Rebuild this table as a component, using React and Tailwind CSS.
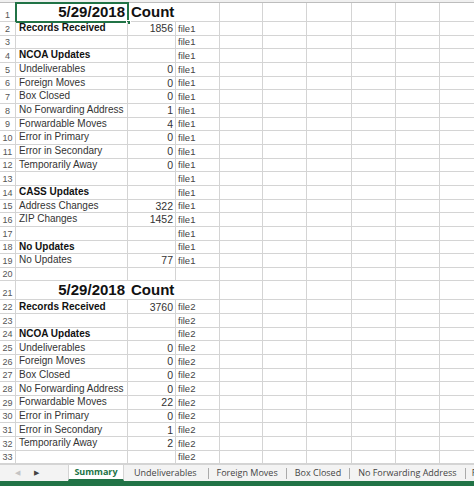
import React from 'react';

const F = "font-['Liberation_Sans',Arial,sans-serif]";

const rows = [
  { n: 1, title: true },
  { n: 2, label: 'Records Received', bold: true, val: '1856', file: 'file1' },
  { n: 3, file: 'file1' },
  { n: 4, label: 'NCOA Updates', bold: true, file: 'file1' },
  { n: 5, label: 'Undeliverables', val: '0', file: 'file1' },
  { n: 6, label: 'Foreign Moves', val: '0', file: 'file1' },
  { n: 7, label: 'Box Closed', val: '0', file: 'file1' },
  { n: 8, label: 'No Forwarding Address', val: '1', file: 'file1' },
  { n: 9, label: 'Forwardable Moves', val: '4', file: 'file1' },
  { n: 10, label: 'Error in Primary', val: '0', file: 'file1' },
  { n: 11, label: 'Error in Secondary', val: '0', file: 'file1' },
  { n: 12, label: 'Temporarily Away', val: '0', file: 'file1' },
  { n: 13, file: 'file1' },
  { n: 14, label: 'CASS Updates', bold: true, file: 'file1' },
  { n: 15, label: 'Address Changes', val: '322', file: 'file1' },
  { n: 16, label: 'ZIP Changes', val: '1452', file: 'file1' },
  { n: 17, file: 'file1' },
  { n: 18, label: 'No Updates', bold: true, file: 'file1' },
  { n: 19, label: 'No Updates', val: '77', file: 'file1' },
  { n: 20 },
  { n: 21, title: true },
  { n: 22, label: 'Records Received', bold: true, val: '3760', file: 'file2' },
  { n: 23, file: 'file2' },
  { n: 24, label: 'NCOA Updates', bold: true, file: 'file2' },
  { n: 25, label: 'Undeliverables', val: '0', file: 'file2' },
  { n: 26, label: 'Foreign Moves', val: '0', file: 'file2' },
  { n: 27, label: 'Box Closed', val: '0', file: 'file2' },
  { n: 28, label: 'No Forwarding Address', val: '0', file: 'file2' },
  { n: 29, label: 'Forwardable Moves', val: '22', file: 'file2' },
  { n: 30, label: 'Error in Primary', val: '0', file: 'file2' },
  { n: 31, label: 'Error in Secondary', val: '1', file: 'file2' },
  { n: 32, label: 'Temporarily Away', val: '2', file: 'file2' },
  { n: 33, file: 'file2' },
];

const extraCols = [43, 44, 45, 44, 44, 40];

const Row = ({ r }) => {
  const h = r.title ? 'h-[19px]' : 'h-[13.67px]';
  return (
    <div className={`flex ${h} relative`}>
      <div className="w-[16px] shrink-0 border-r border-b border-[#d4d4d4] bg-white flex items-end justify-center text-[9px] leading-[12px] text-[#555]">
        {r.n}
      </div>
      {r.title ? (
        <>
          <div className="w-[112px] shrink-0 border-b border-[#d4d4d4] flex items-end justify-end pr-[3px] text-[15px] leading-[18px] font-bold text-[#111]">
            5/29/2018
          </div>
          <div className="w-[92px] shrink-0 border-r border-b border-[#d4d4d4] flex items-end pl-[3px] text-[15px] leading-[18px] font-bold text-[#111]">
            Count
          </div>
        </>
      ) : (
        <>
          <div className={`w-[112px] shrink-0 border-r border-b border-[#d4d4d4] flex items-end pl-[3px] text-[10px] leading-[12.5px] whitespace-nowrap ${r.bold ? 'font-bold text-[#111]' : 'text-[#333]'}`}>
            {r.label}
          </div>
          <div className="w-[48px] shrink-0 border-r border-b border-[#d4d4d4] flex items-end justify-end pr-[2px] text-[10.5px] leading-[12.5px] text-[#333]">
            {r.val}
          </div>
          <div className="w-[44px] shrink-0 border-r border-b border-[#d4d4d4] flex items-end pl-[2px] text-[9.5px] leading-[12px] text-[#444]">
            {r.file}
          </div>
        </>
      )}
      {extraCols.map((w, i) => (
        <div key={i} style={{ width: w }} className="shrink-0 border-r border-b border-[#d4d4d4]" />
      ))}
      {r.n === 1 && (
        <div className="absolute left-[15px] top-[-1px] w-[114px] h-[21px] border-2 border-[#217346] pointer-events-none">
          <div className="absolute right-[-4px] bottom-[-4px] w-[5px] h-[5px] bg-[#217346] border border-white" />
        </div>
      )}
    </div>
  );
};

export default function App() {
  return (
    <div className={`w-[474px] h-[486px] overflow-hidden bg-white flex flex-col ${F}`}>
      <div className="h-[3px] shrink-0 bg-[#f0f0f0] border-b border-[#bdbdbd]" />
      <div className="flex flex-col shrink-0">
        {rows.map((r) => (
          <Row key={r.n} r={r} />
        ))}
      </div>
      <div className="flex-1 flex items-stretch bg-[#f3f3f3] border-t border-[#d4d4d4] text-[9px] text-[#444] font-['Open_Sans',sans-serif] whitespace-nowrap">
        <div className="w-[68px] shrink-0 flex items-center pl-[15px] gap-[14px] text-[7px]">
          <span className="text-[#c4c4c4]">◀</span>
          <span className="text-[#444]">▶</span>
        </div>
        <div className="w-[56px] shrink-0 bg-white border-x border-[#d4d4d4] border-b-2 border-b-[#217346] flex items-center justify-center font-bold text-[#217346]">
          Summary
        </div>
        <div className="flex items-center">
          <span className="pl-[10px] pr-[11px]">Undeliverables</span>
          <span className="w-px h-[11px] bg-[#aaa]" />
          <span className="px-[8px]">Foreign Moves</span>
          <span className="w-px h-[11px] bg-[#aaa]" />
          <span className="px-[8px]">Box Closed</span>
          <span className="w-px h-[11px] bg-[#aaa]" />
          <span className="px-[8px]">No Forwarding Address</span>
          <span className="w-px h-[11px] bg-[#aaa]" />
          <span className="px-[6px]">F</span>
        </div>
      </div>
      <div className="h-[5px] shrink-0 bg-[#217346]" />
    </div>
  );
}
